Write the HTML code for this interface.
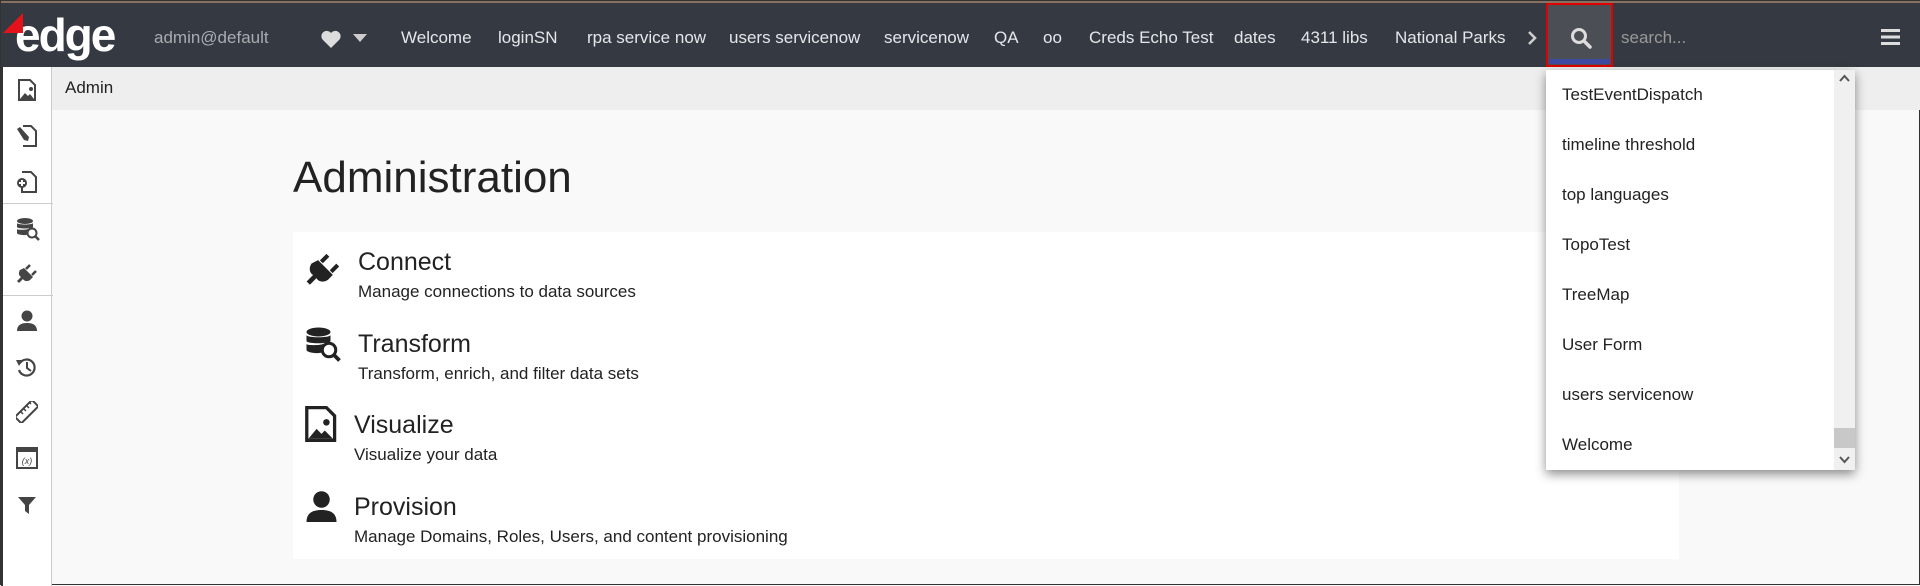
<!DOCTYPE html>
<html><head><meta charset="utf-8"><style>
*{margin:0;padding:0;box-sizing:border-box}
body{width:1920px;height:585px;overflow:hidden;background:#f9f9f9;font-family:"Liberation Sans",sans-serif;position:relative;border:1px solid #333}
.nav{position:absolute;left:0;top:0;width:1920px;height:66px;background:#353a42;border-top:2px solid #8a7060}
.nav .t{position:absolute;top:25px;font-size:17px;color:#e4e6ea;white-space:nowrap}
.logo{position:absolute;left:14px;top:5px;font-size:46px;font-weight:bold;color:#fff;letter-spacing:-2px}
.side{position:absolute;left:0;top:66px;width:51px;height:519px;background:#fff;border-right:1px solid #ccc;border-left:2px solid #333}
.side svg{position:absolute;left:13px}
.sep{position:absolute;left:0;width:50px;height:1px;background:#ccc}
.bc{position:absolute;left:51px;top:66px;width:1869px;height:43px;background:#eee;font-size:17px;color:#222;padding:11px 0 0 13px}
h1{position:absolute;left:292px;top:152px;font-size:44px;font-weight:normal;color:#222}
.panel{position:absolute;left:292px;top:231px;width:1386px;height:327px;background:#fff}
.row{position:absolute;left:0}
.row .h{position:absolute;font-size:25px;color:#222;white-space:nowrap}
.row .s{position:absolute;font-size:17px;color:#222;white-space:nowrap}
.dd{position:absolute;left:1545px;top:69px;width:309px;height:400px;background:#fff;box-shadow:0 4px 10px rgba(0,0,0,.45)}
.dd .i{position:absolute;left:16px;font-size:17px;color:#222}
.sb{position:absolute;right:0;top:0;width:21px;height:400px;background:#f0f0f0}
</style></head><body>
<div class="nav">
<div class="logo">edge</div>
<svg style="position:absolute;left:2px;top:10px" width="22" height="22"><polygon points="0,20 20,20 20,0" fill="#e4121b"/></svg>
<div class="t" style="left:153px;color:#a9acb0">admin@default</div>
<svg style="position:absolute;left:320px;top:27px" width="20" height="18" viewBox="0 0 20 18"><path d="M10 18L1.5 9.5A5 5 0 0 1 10 3a5 5 0 0 1 8.5 6.5z" fill="#ddd"/></svg>
<svg style="position:absolute;left:352px;top:31px" width="14" height="9"><polygon points="0,0 14,0 7,8" fill="#ccc"/></svg>
<div class="t" style="left:400px">Welcome</div>
<div class="t" style="left:497px">loginSN</div>
<div class="t" style="left:586px">rpa service now</div>
<div class="t" style="left:728px">users servicenow</div>
<div class="t" style="left:883px">servicenow</div>
<div class="t" style="left:993px">QA</div>
<div class="t" style="left:1042px">oo</div>
<div class="t" style="left:1088px">Creds Echo Test</div>
<div class="t" style="left:1233px">dates</div>
<div class="t" style="left:1300px">4311 libs</div>
<div class="t" style="left:1394px">National Parks</div>
<svg style="position:absolute;left:1526px;top:28px" width="10" height="14"><path d="M2 1l6 6-6 6" stroke="#ccc" stroke-width="2.6" fill="none"/></svg>
<div style="position:absolute;left:1545px;top:0;width:67px;height:64px;background:#4b4f55;border:2px solid #e00000"><div style="position:absolute;left:1px;right:1px;bottom:1px;height:5px;background:#3d4aa0"></div>
<svg style="position:absolute;left:22px;top:22px" width="22" height="22" viewBox="0 0 22 22"><circle cx="9" cy="9" r="6.5" stroke="#ddd" stroke-width="3" fill="none"/><line x1="14" y1="14" x2="20" y2="20" stroke="#ddd" stroke-width="3.5" stroke-linecap="round"/></svg></div>
<div class="t" style="left:1620px;color:#999">search...</div>
<svg style="position:absolute;left:1880px;top:26px" width="19" height="16"><rect y="0" width="19" height="3" fill="#ddd"/><rect y="6.5" width="19" height="3" fill="#ddd"/><rect y="13" width="19" height="3" fill="#ddd"/></svg>
</div>
<div class="side">
<svg style="top:12px" width="22" height="22" viewBox="0 0 22 22"><path d="M3 1h11l5 5v15H3z" fill="none" stroke="#444" stroke-width="2"/><path d="M4 20l5-6 3 3 2-2 4 5z" fill="#444"/><circle cx="15" cy="10" r="2" fill="#444"/></svg>
<svg style="top:58px" width="22" height="22" viewBox="0 0 22 22"><path d="M7 1h8l5 5v15H7" fill="none" stroke="#444" stroke-width="2"/><path d="M1 4l3-2 9 10-1 4-4-1z" fill="#444"/></svg>
<svg style="top:104px" width="22" height="22" viewBox="0 0 22 22"><path d="M6 1h9l5 5v15H6v-6" fill="none" stroke="#444" stroke-width="2"/><circle cx="6" cy="12" r="5" fill="#444"/><path d="M6 9v6M3 12h6" stroke="#fff" stroke-width="2"/></svg>
<div class="sep" style="top:136px"></div>
<svg style="top:150px" width="24" height="24" viewBox="0 0 24 24"><ellipse cx="9" cy="4" rx="8" ry="3" fill="#444"/><path d="M1 6v4c0 2 16 2 16 0V6c0 2-16 2-16 0zM1 12v4c0 2 10 3 11 1v-5c-2 1-11 1-11 0z" fill="#444"/><circle cx="16" cy="16" r="4.5" fill="none" stroke="#444" stroke-width="2"/><line x1="19" y1="19" x2="23" y2="23" stroke="#444" stroke-width="2.5"/></svg>
<svg style="top:196px" width="22" height="22" viewBox="0 0 22 22"><path d="M14 2l-4 4M20 8l-4 4" stroke="#444" stroke-width="2.5"/><path d="M8 5l9 9-3 3c-3 2-6 1-7-1L3 20 1 18l4-4c-2-1-3-4-1-7z" fill="#444"/></svg>
<div class="sep" style="top:228px"></div>
<svg style="top:243px" width="22" height="22" viewBox="0 0 22 22"><circle cx="11" cy="6" r="5.5" fill="#444"/><path d="M1 21c0-6 4-8 10-8s10 2 10 8z" fill="#444"/></svg>
<svg style="top:289px" width="22" height="22" viewBox="0 0 22 22"><path d="M4 7a8 8 0 1 1-1 7" fill="none" stroke="#444" stroke-width="2.2"/><polygon points="0,4 7,4 3,10" fill="#444"/><path d="M11 6v6l4 3" stroke="#444" stroke-width="2" fill="none"/></svg>
<svg style="top:334px" width="22" height="22" viewBox="0 0 22 22"><rect x="6" y="-1" width="9" height="24" transform="rotate(45 11 11)" fill="none" stroke="#444" stroke-width="2"/><path d="M8 8l2 2M11 5l2 2M5 11l2 2M14 2l1 1" stroke="#444" stroke-width="1.5"/></svg>
<svg style="top:380px" width="22" height="22" viewBox="0 0 22 22"><rect x="1" y="1" width="20" height="20" fill="none" stroke="#444" stroke-width="2"/><rect x="1" y="1" width="20" height="4" fill="#444"/><text x="11" y="17" font-size="9" text-anchor="middle" fill="#444" font-style="italic">(x)</text></svg>
<svg style="top:427px" width="22" height="22" viewBox="0 0 22 22"><path d="M2 3h18l-7 8v9l-4-3v-6z" fill="#444"/></svg>
</div>
<div class="bc">Admin</div>
<h1>Administration</h1>
<div class="panel">
<div class="row" style="top:0">
<svg style="position:absolute;left:12px;top:20px" width="36" height="36" viewBox="0 0 22 22"><path d="M14 2l-4 4M20 8l-4 4" stroke="#222" stroke-width="2.5"/><path d="M8 5l9 9-3 3c-3 2-6 1-7-1L3 20 1 18l4-4c-2-1-3-4-1-7z" fill="#222"/></svg>
<div class="h" style="left:65px;top:16px">Connect</div><div class="s" style="left:65px;top:50px">Manage connections to data sources</div></div>
<div class="row" style="top:82px">
<svg style="position:absolute;left:12px;top:12px" width="36" height="36" viewBox="0 0 24 24"><ellipse cx="9" cy="4" rx="8" ry="3" fill="#222"/><path d="M1 6v4c0 2 16 2 16 0V6c0 2-16 2-16 0zM1 12v4c0 2 10 3 11 1v-5c-2 1-11 1-11 0z" fill="#222"/><circle cx="16" cy="16" r="4.5" fill="none" stroke="#222" stroke-width="2"/><line x1="19" y1="19" x2="23" y2="23" stroke="#222" stroke-width="2.5"/></svg>
<div class="h" style="left:65px;top:16px">Transform</div><div class="s" style="left:65px;top:50px">Transform, enrich, and filter data sets</div></div>
<div class="row" style="top:163px">
<svg style="position:absolute;left:12px;top:11px" width="33" height="36" viewBox="0 0 20 22"><path d="M1 1h12l5 5v15H1z" fill="none" stroke="#222" stroke-width="2"/><path d="M2 20l5-6 3 3 2-2 5 5z" fill="#222"/><circle cx="13" cy="10" r="2" fill="#222"/></svg>
<div class="h" style="left:61px;top:16px">Visualize</div><div class="s" style="left:61px;top:50px">Visualize your data</div></div>
<div class="row" style="top:245px">
<svg style="position:absolute;left:12px;top:12px" width="33" height="36" viewBox="0 0 22 22"><circle cx="11" cy="6" r="5.5" fill="#222"/><path d="M1 21c0-6 4-8 10-8s10 2 10 8z" fill="#222"/></svg>
<div class="h" style="left:61px;top:16px">Provision</div><div class="s" style="left:61px;top:50px">Manage Domains, Roles, Users, and content provisioning</div></div>
</div>
<div class="dd">
<div class="i" style="top:15px">TestEventDispatch</div>
<div class="i" style="top:65px">timeline threshold</div>
<div class="i" style="top:115px">top languages</div>
<div class="i" style="top:165px">TopoTest</div>
<div class="i" style="top:215px">TreeMap</div>
<div class="i" style="top:265px">User Form</div>
<div class="i" style="top:315px">users servicenow</div>
<div class="i" style="top:365px">Welcome</div>
<div class="sb"><div style="position:absolute;left:0;width:21px;top:358px;height:20px;background:#c8c8c8"></div>
<svg style="position:absolute;left:5px;top:4px" width="11" height="8"><path d="M1 7l4.5-5 4.5 5" stroke="#555" stroke-width="2" fill="none"/></svg>
<svg style="position:absolute;left:5px;top:386px" width="11" height="8"><path d="M1 1l4.5 5 4.5-5" stroke="#555" stroke-width="2" fill="none"/></svg></div>
</div>
</body></html>
